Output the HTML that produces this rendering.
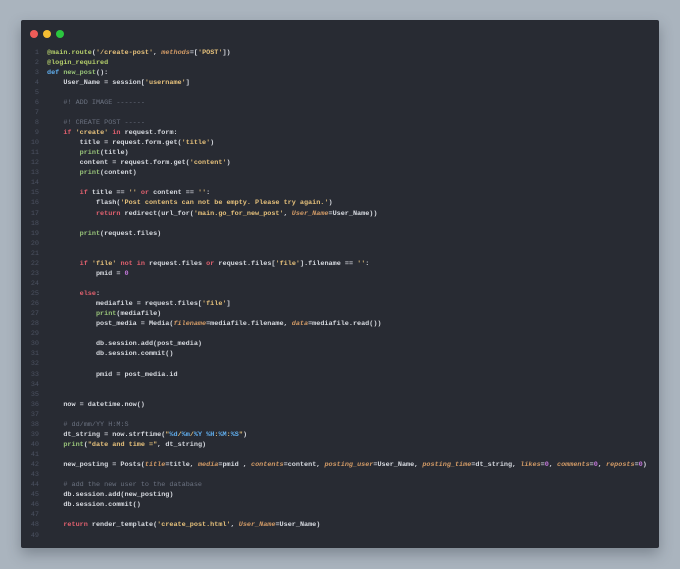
<!DOCTYPE html>
<html><head><meta charset="utf-8"><style>
html,body{margin:0;padding:0;width:680px;height:569px;background:#aab4be;overflow:hidden}
.win{position:absolute;left:21px;top:20px;width:638px;height:528px;background:#282b33;box-shadow:0 6px 14px rgba(40,50,60,.35);border-radius:2px}
.dot{position:absolute;top:10px;width:8px;height:8px;border-radius:50%}
pre{position:absolute;margin:0;top:27.5px;font-family:"Liberation Mono",monospace;font-size:6.8px;line-height:10.06px;color:#d7dae0;white-space:pre}
.ln{left:8px;color:#4b5160;text-align:right;width:10px}
.code{left:26px;font-weight:bold}
.k{color:#e0606e}.s{color:#e5c07b}.d{color:#61afef}.f{color:#98c379}.c{color:#6b7280;font-weight:normal}.p{color:#d19a66;font-style:italic}.n{color:#c678dd}.g{color:#b5cf6b}
</style></head><body>
<div class="win">
<div class="dot" style="left:9px;background:#ee5c58"></div>
<div class="dot" style="left:22px;background:#f4bd33"></div>
<div class="dot" style="left:35px;background:#2bc63f"></div>
<pre class="ln">1
2
3
4
5
6
7
8
9
10
11
12
13
14
15
16
17
18
19
20
21
22
23
24
25
26
27
28
29
30
31
32
33
34
35
36
37
38
39
40
41
42
43
44
45
46
47
48
49</pre>
<pre class="code"><span class="g">@main.route</span>(<span class="s">'/create-post'</span>, <span class="p">methods</span>=[<span class="s">'POST'</span>])
<span class="g">@login_required</span>
<span class="d">def</span> <span class="f">new_post</span>():
    User_Name = session[<span class="s">'username'</span>]

    <span class="c">#! ADD IMAGE -------</span>

    <span class="c">#! CREATE POST -----</span>
    <span class="k">if</span> <span class="s">'create'</span> <span class="k">in</span> request.form:
        title = request.form.get(<span class="s">'title'</span>)
        <span class="f">print</span>(title)
        content = request.form.get(<span class="s">'content'</span>)
        <span class="f">print</span>(content)

        <span class="k">if</span> title == <span class="s">''</span> <span class="k">or</span> content == <span class="s">''</span>:
            flash(<span class="s">'Post contents can not be empty. Please try again.'</span>)
            <span class="k">return</span> redirect(url_for(<span class="s">'main.go_for_new_post'</span>, <span class="p">User_Name</span>=User_Name))

        <span class="f">print</span>(request.files)


        <span class="k">if</span> <span class="s">'file'</span> <span class="k">not in</span> request.files <span class="k">or</span> request.files[<span class="s">'file'</span>].filename == <span class="s">''</span>:
            pmid = <span class="n">0</span>

        <span class="k">else</span>:
            mediafile = request.files[<span class="s">'file'</span>]
            <span class="f">print</span>(mediafile)
            post_media = Media(<span class="p">filename</span>=mediafile.filename, <span class="p">data</span>=mediafile.read())

            db.session.add(post_media)
            db.session.commit()

            pmid = post_media.id


    now = datetime.now()

    <span class="c"># dd/mm/YY H:M:S</span>
    dt_string = now.strftime(<span class="s">"<span class="d">%d</span>/<span class="d">%m</span>/<span class="d">%Y</span> <span class="d">%H</span>:<span class="d">%M</span>:<span class="d">%S</span>"</span>)
    <span class="f">print</span>(<span class="s">"date and time ="</span>, dt_string)

    new_posting = Posts(<span class="p">title</span>=title, <span class="p">media</span>=pmid , <span class="p">contents</span>=content, <span class="p">posting_user</span>=User_Name, <span class="p">posting_time</span>=dt_string, <span class="p">likes</span>=<span class="n">0</span>, <span class="p">comments</span>=<span class="n">0</span>, <span class="p">reposts</span>=<span class="n">0</span>)

    <span class="c"># add the new user to the database</span>
    db.session.add(new_posting)
    db.session.commit()

    <span class="k">return</span> render_template(<span class="s">'create_post.html'</span>, <span class="p">User_Name</span>=User_Name)
</pre>
</div>
</body></html>
